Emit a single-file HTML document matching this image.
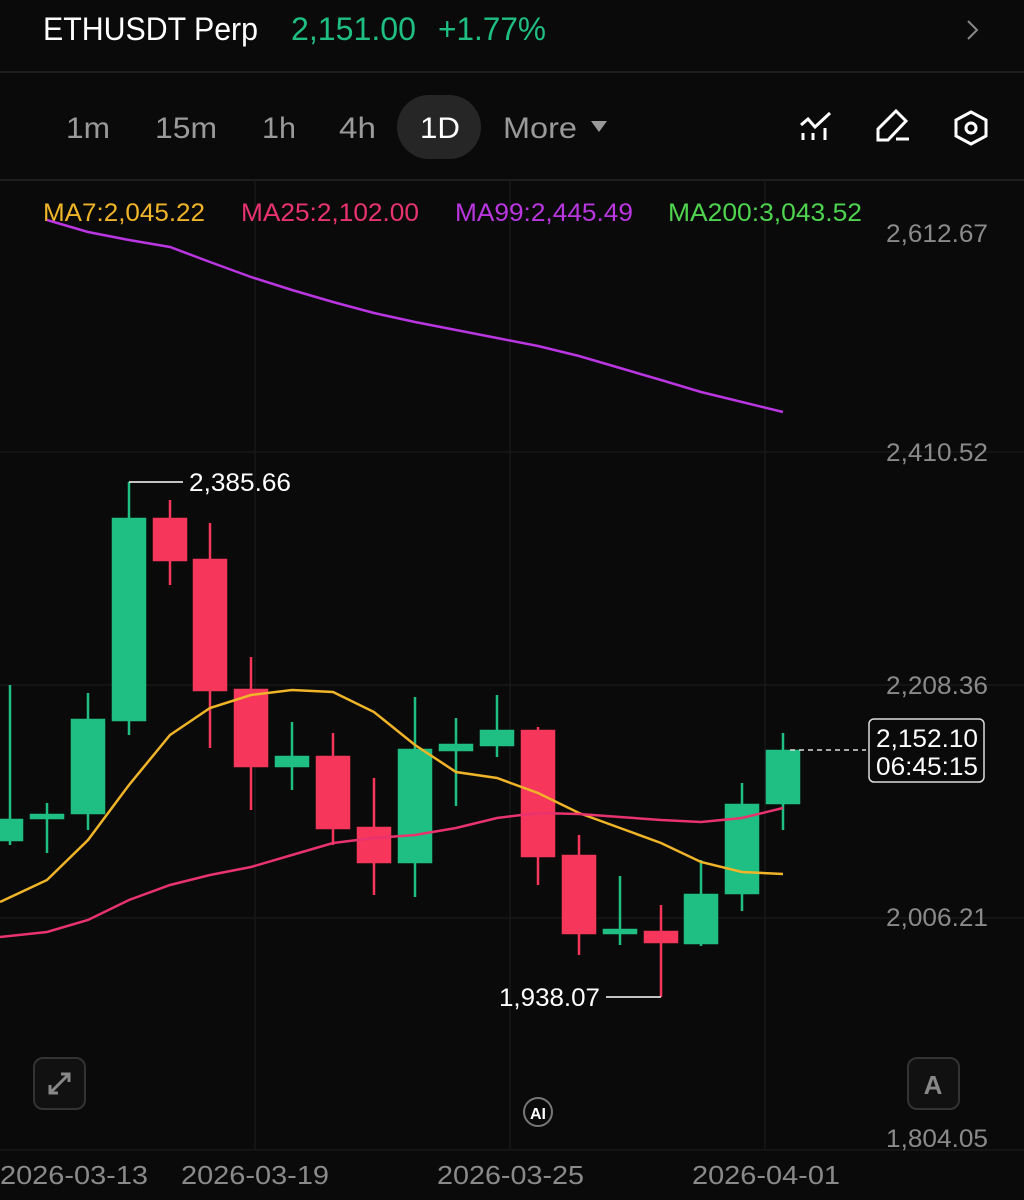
<!DOCTYPE html>
<html><head><meta charset="utf-8"><style>
html,body{margin:0;padding:0;background:#0a0a0a;}
svg{display:block;font-family:"Liberation Sans",sans-serif;}
</style></head><body>
<svg width="1024" height="1200" viewBox="0 0 1024 1200" xmlns="http://www.w3.org/2000/svg">
<rect width="1024" height="1200" fill="#0a0a0a"/>
<!-- header -->
<text x="43" y="40" font-size="32" fill="#fff" font-weight="500" textLength="215" lengthAdjust="spacingAndGlyphs">ETHUSDT Perp</text>
<text x="291" y="40" font-size="32" fill="#1fbf83" textLength="125" lengthAdjust="spacingAndGlyphs">2,151.00</text>
<text x="438" y="40" font-size="32" fill="#1fbf83" textLength="108" lengthAdjust="spacingAndGlyphs">+1.77%</text>
<path d="M968 21 L977 30 L968 39" stroke="#888" stroke-width="2" fill="none"/>
<line x1="0" y1="72" x2="1024" y2="72" stroke="#1e1e1e" stroke-width="2"/>
<!-- toolbar -->
<rect x="397" y="95" width="84" height="64" rx="32" fill="#262626"/>
<g font-size="30" fill="#9a9a9a">
<text x="66" y="138" textLength="44" lengthAdjust="spacingAndGlyphs">1m</text>
<text x="155" y="138" textLength="62" lengthAdjust="spacingAndGlyphs">15m</text>
<text x="262" y="138" textLength="34" lengthAdjust="spacingAndGlyphs">1h</text>
<text x="339" y="138" textLength="37" lengthAdjust="spacingAndGlyphs">4h</text>
<text x="420" y="138" fill="#fff" textLength="40" lengthAdjust="spacingAndGlyphs">1D</text>
<text x="503" y="138" textLength="74" lengthAdjust="spacingAndGlyphs">More</text></g>
<path d="M591 121 L607 121 L599 132 Z" fill="#9a9a9a"/>
<g stroke="#fff" stroke-width="3" fill="none">
<path d="M801 125 L808 119 L815 127 L830 113"/>
<path d="M803 133 v7 M813 133 v7 M825 128 v12"/>
<path d="M878 140 L878 129 L896 111 L906 121 L888 140 Z"/><path d="M896 139 H909"/>
<path d="M971 112 L986 120 L986 136 L971 144 L956 136 L956 120 Z"/>
<circle cx="971" cy="128" r="5"/>
</g>
<line x1="0" y1="180" x2="1024" y2="180" stroke="#1e1e1e" stroke-width="2"/>
<!-- grid -->
<g stroke="#181818" stroke-width="1.5">
<line x1="255" y1="180" x2="255" y2="1150"/><line x1="510" y1="180" x2="510" y2="1150"/><line x1="765" y1="180" x2="765" y2="1150"/>
<line x1="0" y1="452" x2="1024" y2="452"/><line x1="0" y1="685" x2="1024" y2="685"/><line x1="0" y1="918" x2="1024" y2="918"/>
<line x1="0" y1="1150" x2="1024" y2="1150"/>
</g>
<!-- MA labels -->
<g font-size="25">
<text x="43" y="221" fill="#f0b429" textLength="162" lengthAdjust="spacingAndGlyphs">MA7:2,045.22</text>
<text x="241" y="221" fill="#e8336e" textLength="178" lengthAdjust="spacingAndGlyphs">MA25:2,102.00</text>
<text x="455" y="221" fill="#b936e0" textLength="178" lengthAdjust="spacingAndGlyphs">MA99:2,445.49</text>
<text x="668" y="221" fill="#4ed44e" textLength="194" lengthAdjust="spacingAndGlyphs">MA200:3,043.52</text>
</g>
<g font-size="25" fill="#8a8a8a">
<text x="886" y="242" textLength="102" lengthAdjust="spacingAndGlyphs">2,612.67</text>
<text x="886" y="461" textLength="102" lengthAdjust="spacingAndGlyphs">2,410.52</text>
<text x="886" y="694" textLength="102" lengthAdjust="spacingAndGlyphs">2,208.36</text>
<text x="886" y="926" textLength="102" lengthAdjust="spacingAndGlyphs">2,006.21</text>
<text x="886" y="1147" textLength="102" lengthAdjust="spacingAndGlyphs">1,804.05</text>
</g>
<!-- MA lines -->
<polyline fill="none" stroke="#b936e0" stroke-width="2.5" points="47,220 88,232 129,240 170,247 210,262 251,277 292,290 333,302 374,313 415,322 456,330 497,338 538,346 579,356 620,368 661,380 701,392 742,402 783,412"/>
<!-- candles -->
<g fill="#1fbf83" stroke="#1fbf83" stroke-width="2.5">
<line x1="10" y1="685" x2="10" y2="845"/><rect x="-6" y="820" width="28" height="20"/>
<line x1="47" y1="803" x2="47" y2="853"/><rect x="31" y="815" width="32" height="3"/>
<line x1="88" y1="693" x2="88" y2="830"/><rect x="72" y="720" width="32" height="93"/>
<line x1="129" y1="482" x2="129" y2="735"/><rect x="113" y="519" width="32" height="201"/>
<line x1="292" y1="722" x2="292" y2="790"/><rect x="276" y="757" width="32" height="9"/>
<line x1="415" y1="697" x2="415" y2="897"/><rect x="399" y="750" width="32" height="112"/>
<line x1="456" y1="718" x2="456" y2="806"/><rect x="440" y="745" width="32" height="5"/>
<line x1="497" y1="695" x2="497" y2="757"/><rect x="481" y="731" width="32" height="14"/>
<line x1="620" y1="876" x2="620" y2="945"/><rect x="604" y="930" width="32" height="3"/>
<line x1="701" y1="860" x2="701" y2="946"/><rect x="685" y="895" width="32" height="48"/>
<line x1="742" y1="783" x2="742" y2="911"/><rect x="726" y="805" width="32" height="88"/>
<line x1="783" y1="733" x2="783" y2="830"/><rect x="767" y="751" width="32" height="52"/>
</g>
<g fill="#f6365a" stroke="#f6365a" stroke-width="2.5">
<line x1="170" y1="500" x2="170" y2="585"/><rect x="154" y="519" width="32" height="41"/>
<line x1="210" y1="523" x2="210" y2="748"/><rect x="194" y="560" width="32" height="130"/>
<line x1="251" y1="657" x2="251" y2="810"/><rect x="235" y="690" width="32" height="76"/>
<line x1="333" y1="733" x2="333" y2="845"/><rect x="317" y="757" width="32" height="71"/>
<line x1="374" y1="778" x2="374" y2="895"/><rect x="358" y="828" width="32" height="34"/>
<line x1="538" y1="727" x2="538" y2="885"/><rect x="522" y="731" width="32" height="125"/>
<line x1="579" y1="835" x2="579" y2="955"/><rect x="563" y="856" width="32" height="77"/>
<line x1="661" y1="905" x2="661" y2="997"/><rect x="645" y="932" width="32" height="10"/>
</g>
<polyline fill="none" stroke="#f0b429" stroke-width="2.5" points="0,902 47,880 88,840 129,785 170,735 210,708 251,695 292,690 333,692 374,712 415,745 456,772 497,778 538,793 579,813 620,828 661,843 701,862 742,872 783,874"/>
<polyline fill="none" stroke="#e8336e" stroke-width="2.5" points="0,937 47,932 88,920 129,900 170,885 210,875 251,867 292,855 333,843 374,838 415,835 456,828 497,818 538,813 579,814 620,817 661,820 701,822 742,818 783,808"/>
<!-- hi/lo labels -->
<line x1="129" y1="482" x2="183" y2="482" stroke="#fff" stroke-width="1.5"/>
<text x="189" y="491" font-size="25" fill="#fff" textLength="102" lengthAdjust="spacingAndGlyphs">2,385.66</text>
<line x1="606" y1="997" x2="661" y2="997" stroke="#fff" stroke-width="1.5"/>
<text x="499" y="1006" font-size="25" fill="#fff" textLength="101" lengthAdjust="spacingAndGlyphs">1,938.07</text>
<!-- current price -->
<line x1="790" y1="750" x2="866" y2="750" stroke="#ddd" stroke-width="1.5" stroke-dasharray="5,4"/>
<rect x="869" y="719" width="115" height="63" rx="5" fill="#0a0a0a" stroke="#ddd" stroke-width="1.5"/>
<text x="876" y="747" font-size="25" fill="#fff" textLength="102" lengthAdjust="spacingAndGlyphs">2,152.10</text>
<text x="876" y="775" font-size="25" fill="#fff" textLength="102" lengthAdjust="spacingAndGlyphs">06:45:15</text>
<!-- buttons -->
<rect x="34" y="1058" width="51" height="51" rx="9" fill="#111" stroke="#333" stroke-width="2"/>
<g stroke="#888" stroke-width="3" fill="none"><path d="M50 1093 L69 1074"/><path d="M61 1074 H69 V1082"/><path d="M50 1085 V1093 H58"/></g>
<rect x="908" y="1058" width="51" height="51" rx="9" fill="#111" stroke="#333" stroke-width="2"/>
<text x="933" y="1094" font-size="26" font-weight="bold" fill="#888" text-anchor="middle">A</text>
<circle cx="538" cy="1112" r="14" fill="#0a0a0a" stroke="#777" stroke-width="2"/>
<text x="538" y="1119" font-size="16" font-weight="bold" fill="#fff" text-anchor="middle">AI</text>
<!-- dates -->
<g font-size="26" fill="#8a8a8a">
<text x="0" y="1184" textLength="148" lengthAdjust="spacingAndGlyphs">2026-03-13</text>
<text x="181" y="1184" textLength="148" lengthAdjust="spacingAndGlyphs">2026-03-19</text>
<text x="437" y="1184" textLength="147" lengthAdjust="spacingAndGlyphs">2026-03-25</text>
<text x="692" y="1184" textLength="148" lengthAdjust="spacingAndGlyphs">2026-04-01</text>
</g>
</svg>
</body></html>
